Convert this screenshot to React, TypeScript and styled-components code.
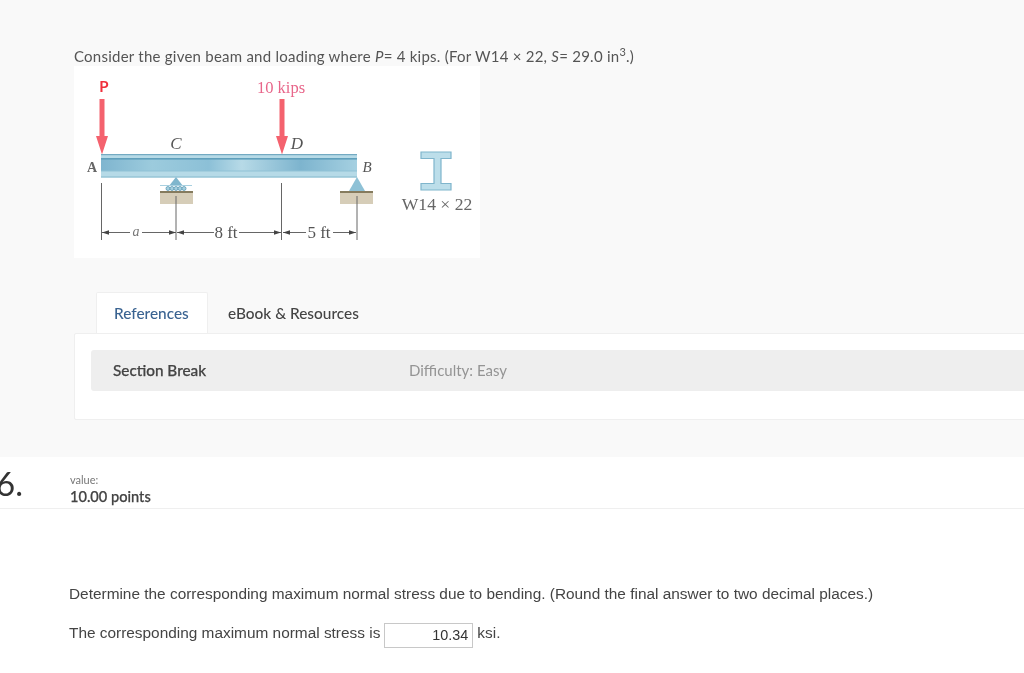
import React from "react";
import styled, { createGlobalStyle } from "styled-components";

const Global = createGlobalStyle`
  html, body { margin: 0; padding: 0; background: #fff; overflow: hidden; }
  body { font-family: Lato, "Open Sans", sans-serif; color: #4a4a4a; }
  sub, sup { line-height: 0; }
`;

const Page = styled.div`
  width: 1024px;
  height: 673px;
  overflow: hidden;
  filter: blur(0.35px);
`;

const QuestionShade = styled.section`
  background: #f9f9f9;
  height: 457px;
  padding: 45px 0 0 74px;
  box-sizing: border-box;
`;

const Intro = styled.p`
  margin: 0;
  height: 21px;
  font-size: 15px;
  line-height: 22px;
  letter-spacing: 0.24px;
  color: #555;
  white-space: nowrap;
  em { font-style: italic; }
  sup { font-size: 11px; }
`;

const Figure = styled.div`
  width: 406px;
  height: 192px;
  background: #fff;
  svg { display: block; }
`;

const TabRow = styled.div`
  display: flex;
  margin: 34px 0 0 22px;
  height: 41px;
`;

const Tab = styled.div<{ $active?: boolean }>`
  display: flex;
  align-items: center;
  padding: ${(p) => (p.$active ? "0" : "1px")} 18px 0 ${(p) => (p.$active ? "17px" : "20px")};
  width: ${(p) => (p.$active ? "112px" : "auto")};
  box-sizing: border-box;
  font-size: 15.4px;
  font-weight: 500;
  color: ${(p) => (p.$active ? "#3a6391" : "#444")};
  background: ${(p) => (p.$active ? "#fff" : "transparent")};
  border: ${(p) => (p.$active ? "1px solid #efefef" : "none")};
  border-bottom: none;
  border-radius: 2px 2px 0 0;
  white-space: nowrap;
`;

const Panel = styled.div`
  width: 1000px;
  height: 87px;
  box-sizing: border-box;
  background: #fff;
  border: 1px solid #efefef;
  border-radius: 2px;
  padding: 16px 0 0 16px;
`;

const SectionBar = styled.div`
  display: flex;
  align-items: center;
  height: 41px;
  padding: 0 0 2px 22px;
  width: 1000px;
  background: #eeeeee;
  border-radius: 3px;
  box-sizing: border-box;
  font-size: 15.3px;
`;

const SectionTitle = styled.span`
  width: 296px;
  font-weight: 500;
  color: #444;
  -webkit-text-stroke: 0.25px #444;
`;

const Difficulty = styled.span`
  color: #949494;
  font-size: 15px;
`;

const ValueRow = styled.div`
  display: flex;
  align-items: flex-start;
  height: 52px;
  box-sizing: border-box;
  border-bottom: 1px solid #efefef;
`;

const QuestionNumber = styled.div`
  width: 70px;
  margin-left: -4px;
  margin-right: 4px;
  padding-top: 6px;
  font-size: 33px;
  line-height: 40px;
  color: #333;
`;

const Points = styled.div`
  padding-top: 16px;
`;

const ValueLabel = styled.div`
  font-size: 11px;
  line-height: 14px;
  color: #777;
`;

const ValueAmount = styled.div`
  font-size: 14.6px;
  line-height: 20px;
  font-weight: 500;
  color: #444;
  -webkit-text-stroke: 0.25px #444;
`;

const Body = styled.div`
  padding: 75px 0 0 69px;
  font-family: "Liberation Sans", Arial, sans-serif;
  font-size: 15.4px;
  color: #444;
`;

const Line = styled.div`
  height: 20px;
  line-height: 20px;
  white-space: nowrap;
`;

const AnswerLine = styled(Line)`
  display: flex;
  align-items: center;
  margin-top: 17px;
  height: 24px;
`;

const AnswerBox = styled.span`
  display: inline-block;
  width: 89px;
  height: 25px;
  box-sizing: border-box;
  margin: 5px 4px 0 4px;
  padding: 0 4px;
  border: 1px solid #c8c8c8;
  background: #fff;
  text-align: right;
  line-height: 22px;
  font-size: 14.4px;
  color: #333;
`;

const serif = "'Liberation Serif', serif";
const ink = "#555";
const pink = "#f4626e";

const Arrow = ({ x }: { x: number }) => (
  <path d={`M${x - 2.5} 99H${x + 2.5}V136H${x + 6}L${x} 154.5L${x - 6} 136H${x - 2.5}Z`} fill={pink} />
);

const Support = ({ x0 }: { x0: number }) => (
  <g>
    <rect x={x0} y={193} width={33} height={11} fill="#d6cdb8" />
    <rect x={x0} y={191} width={33} height={2} fill="#857b5e" />
  </g>
);

const dimArrows: [number, number][] = [
  [102, 1], [176, -1], [177, 1], [281, -1], [283, 1], [356, -1],
];

const BeamFigure = () => (
  <svg width="406" height="192" viewBox="74 66 406 192" role="img">
    <defs>
      <linearGradient id="web" x1="0" x2="1" y1="0" y2="0">
        <stop offset="0" stopColor="#7fb5cf" />
        <stop offset="0.2" stopColor="#9ccbdd" />
        <stop offset="0.42" stopColor="#8cc0d7" />
        <stop offset="0.55" stopColor="#b7dae7" />
        <stop offset="0.78" stopColor="#7db4ce" />
        <stop offset="1" stopColor="#a5d0e1" />
      </linearGradient>
    </defs>
    <text x="104" y="92" fontFamily="Lato, sans-serif" fontWeight="700" fontSize="15" fill="#f0303c" textAnchor="middle">P</text>
    <text x="281" y="92.5" fontFamily={serif} fontSize="16.5" fill="#e8668a" textAnchor="middle">10 kips</text>
    <Arrow x={102} />
    <Arrow x={282} />

    <rect x="101" y="154" width="256" height="23.5" fill="#b6dae7" />
    <rect x="101" y="154" width="256" height="1.2" fill="#73aac2" />
    <rect x="101" y="159" width="256" height="12" fill="url(#web)" />
    <rect x="101" y="158" width="256" height="1.6" fill="#5f9fbb" />
    <rect x="101" y="170.5" width="256" height="1" fill="#8fc2d6" />
    <rect x="101" y="176.5" width="256" height="1" fill="#86b9ce" />

    <text x="92" y="172" fontFamily={serif} fontSize="14" fontWeight="700" fill="#666" textAnchor="middle">A</text>
    <text x="176" y="149" fontFamily={serif} fontSize="17" fontStyle="italic" fill={ink} textAnchor="middle">C</text>
    <text x="297" y="149" fontFamily={serif} fontSize="17" fontStyle="italic" fill={ink} textAnchor="middle">D</text>
    <text x="367" y="172" fontFamily={serif} fontSize="15" fontStyle="italic" fill={ink} textAnchor="middle">B</text>

    <path d="M176 177L183 186H169Z" fill="#7fb6cd" />
    <path d="M160 185.5H192" stroke="#a8d0e0" strokeWidth="1" />
    {[168, 172, 176, 180, 184].map((cx) => (
      <circle key={cx} cx={cx} cy={188.5} r={2} fill="#a7d0e0" stroke="#5c9ab5" strokeWidth="0.8" />
    ))}
    <Support x0={160} />
    <path d="M357 177L365 191H349Z" fill="#8ec1d6" />
    <Support x0={340} />

    <g stroke="#666" strokeWidth="1" fill="none">
      <path d="M101.5 183V240M176 196V240M281.5 183V240M357 196V240" />
      <path d="M102 232.5H130M142 232.5H176M177 232.5H214M239 232.5H281M283 232.5H306M333 232.5H356" />
    </g>
    {dimArrows.map(([x, d]) => (
      <path key={`${x}`} d={`M${x} 232.5L${x + d * 7} 230.3V234.7Z`} fill="#444" />
    ))}
    <text x="136" y="236" fontFamily={serif} fontSize="14" fontStyle="italic" fill="#777" textAnchor="middle">a</text>
    <text x="226" y="238" fontFamily={serif} fontSize="17" fill={ink} textAnchor="middle">8 ft</text>
    <text x="319" y="238" fontFamily={serif} fontSize="17" fill={ink} textAnchor="middle">5 ft</text>

    <path d="M421 152H451V158.5H441V183.5H451V190H421V183.5H434V158.5H421Z" fill="#bcdeea" stroke="#7fb5cc" strokeWidth="1.2" />
    <text x="437" y="209.5" fontFamily={serif} fontSize="17.6" fill="#666" textAnchor="middle">W14 × 22</text>
  </svg>
);

export default function App() {
  return (
    <Page>
      <Global />
      <QuestionShade>
        <Intro>
          Consider the given beam and loading where <em>P</em>= 4 kips. (For W14 × 22, <em>S</em>= 29.0 in<sup>3</sup>.)
        </Intro>
        <Figure>
          <BeamFigure />
        </Figure>
        <TabRow>
          <Tab $active>References</Tab>
          <Tab>eBook &amp; Resources</Tab>
        </TabRow>
        <Panel>
          <SectionBar>
            <SectionTitle>Section Break</SectionTitle>
            <Difficulty>Difficulty: Easy</Difficulty>
          </SectionBar>
        </Panel>
      </QuestionShade>
      <ValueRow>
        <QuestionNumber>6.</QuestionNumber>
        <Points>
          <ValueLabel>value:</ValueLabel>
          <ValueAmount>10.00 points</ValueAmount>
        </Points>
      </ValueRow>
      <Body>
        <Line>Determine the corresponding maximum normal stress due to bending. (Round the final answer to two decimal places.)</Line>
        <AnswerLine>
          The corresponding maximum normal stress is
          <AnswerBox>10.34</AnswerBox>
          ksi.
        </AnswerLine>
      </Body>
    </Page>
  );
}
